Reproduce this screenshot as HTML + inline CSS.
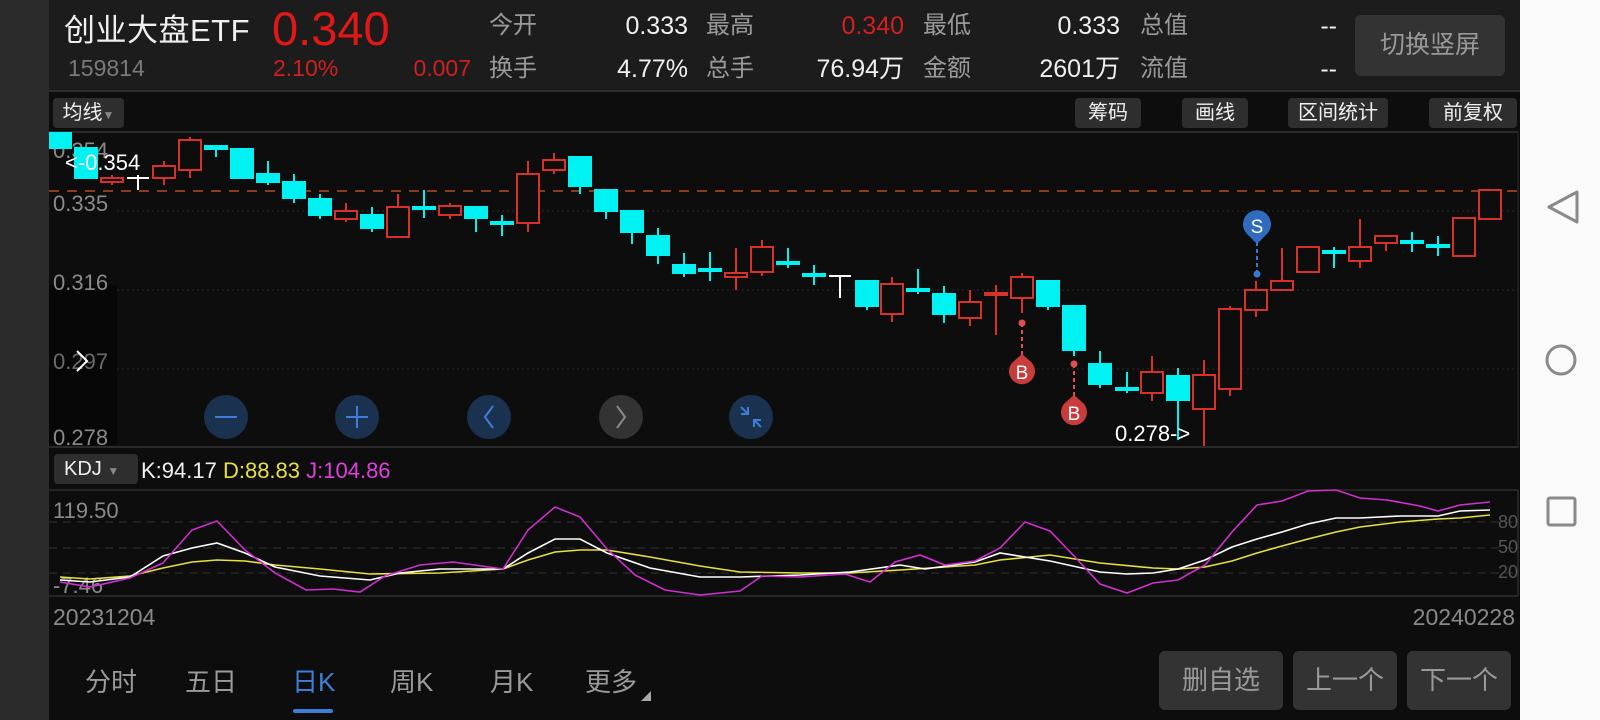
<!DOCTYPE html>
<html><head><meta charset="utf-8"><style>
*{margin:0;padding:0;box-sizing:border-box}
body{width:1600px;height:720px;background:#0d0d0d;position:relative;overflow:hidden;font-family:"Liberation Sans","Noto Sans CJK SC",sans-serif}
.a{position:absolute;white-space:nowrap}
.g{color:#9a9a9a}
.w{color:#f0f0f0}
.r{color:#e01818}
.btn{position:absolute;background:#2e2e2e;color:#f0f0f0;font-size:20px;border-radius:4px;text-align:center}
.bb{position:absolute;background:#333;color:#9a9a9a;font-size:26px;border-radius:6px;text-align:center}
.v{font-size:25px;line-height:30px;height:30px}
.l{font-size:24px;line-height:30px;height:30px}
</style></head><body>
<div class="a" style="left:0;top:0;width:49px;height:720px;background:#2b2b2b"></div>
<div class="a" style="left:49px;top:0;width:1471px;height:90px;background:#1c1c1c"></div>
<div class="a" style="left:49px;top:90px;width:1471px;height:2px;background:#2e2e2e"></div>
<div class="a" style="left:1520px;top:0;width:80px;height:720px;background:#fafafa"></div>
<svg class="a" style="left:1520px;top:0" width="80" height="720">
<path d="M57 192 L29 207 L57 222 Z" fill="none" stroke="#8a8a8a" stroke-width="3" stroke-linejoin="round"/>
<circle cx="41" cy="360" r="14" fill="none" stroke="#8a8a8a" stroke-width="3"/>
<rect x="28" y="498" width="27" height="27" rx="2" fill="none" stroke="#8a8a8a" stroke-width="3"/>
</svg>

<div class="a w" style="left:64px;top:5px;font-size:31px;letter-spacing:0.5px">创业大盘ETF</div>
<div class="a r" style="left:272px;top:1px;font-size:47px">0.340</div>
<div class="a" style="left:68px;top:55px;font-size:23px;color:#7a7a7a">159814</div>
<div class="a r" style="left:273px;top:55px;font-size:23px;color:#d02020">2.10%</div>
<div class="a" style="left:371px;top:55px;font-size:23px;width:100px;text-align:right;color:#d02020">0.007</div>

<div class="a g l" style="left:489px;top:11px">今开</div>
<div class="a w v" style="left:588px;top:11px;width:100px;text-align:right">0.333</div>
<div class="a g l" style="left:706px;top:11px">最高</div>
<div class="a v" style="left:804px;top:11px;width:100px;text-align:right;color:#d02020">0.340</div>
<div class="a g l" style="left:923px;top:11px">最低</div>
<div class="a w v" style="left:1020px;top:11px;width:100px;text-align:right">0.333</div>
<div class="a g l" style="left:1140px;top:11px">总值</div>
<div class="a w v" style="left:1237px;top:11px;width:100px;text-align:right">--</div>

<div class="a g l" style="left:489px;top:54px">换手</div>
<div class="a w v" style="left:588px;top:54px;width:100px;text-align:right">4.77%</div>
<div class="a g l" style="left:706px;top:54px">总手</div>
<div class="a w v" style="left:784px;top:54px;width:120px;text-align:right">76.94万</div>
<div class="a g l" style="left:923px;top:54px">金额</div>
<div class="a w v" style="left:1000px;top:54px;width:120px;text-align:right">2601万</div>
<div class="a g l" style="left:1140px;top:54px">流值</div>
<div class="a w v" style="left:1237px;top:54px;width:100px;text-align:right">--</div>
<div class="a" style="left:1355px;top:15px;width:150px;height:61px;background:#333;border-radius:6px;color:#999;font-size:25px;text-align:center;line-height:61px">切换竖屏</div>

<div class="btn" style="left:53px;top:98px;width:71px;height:30px;line-height:30px">均线<span style="color:#888;font-size:12px">▼</span></div>
<div class="btn" style="left:1075px;top:98px;width:66px;height:30px;line-height:30px">筹码</div>
<div class="btn" style="left:1182px;top:98px;width:66px;height:30px;line-height:30px">画线</div>
<div class="btn" style="left:1288px;top:98px;width:100px;height:30px;line-height:30px">区间统计</div>
<div class="btn" style="left:1429px;top:98px;width:88px;height:30px;line-height:30px">前复权</div>

<svg class="a" style="left:0;top:0" width="1520" height="720">
<defs><clipPath id="cp"><rect x="49" y="132" width="1469" height="316"/></clipPath></defs>
<line x1="49" y1="132" x2="1518" y2="132" stroke="#2a2a2a" stroke-width="2"/>
<rect x="49" y="285" width="68" height="160" fill="#070707"/>
<g stroke="#2c2c2c" stroke-width="1" stroke-dasharray="2,3">
<line x1="117" y1="211" x2="1518" y2="211"/><line x1="117" y1="290" x2="1518" y2="290"/><line x1="117" y1="369" x2="1518" y2="369"/>
</g>
<line x1="49" y1="191" x2="1518" y2="191" stroke="#8a3d1c" stroke-width="2" stroke-dasharray="10,8"/>
<g fill="#8a8a8a" font-size="22" font-family="Liberation Sans,sans-serif">
<text x="53" y="158">0.354</text><text x="53" y="211">0.335</text><text x="53" y="290">0.316</text><text x="53" y="369" fill="#6a6a6a">0.297</text><text x="53" y="445">0.278</text>
</g>
<g clip-path="url(#cp)">
<g fill="#00f2f2" stroke="#00f2f2" stroke-width="2">
<rect x="49" y="133" width="22" height="15"/>
<rect x="75" y="148" width="22" height="30"/>
<line x1="216" y1="146" x2="216" y2="157"/><rect x="205" y="146" width="22" height="3"/>
<rect x="231" y="149" width="22" height="29"/>
<line x1="268" y1="161" x2="268" y2="185"/><rect x="257" y="174" width="22" height="8"/>
<line x1="294" y1="174" x2="294" y2="203"/><rect x="283" y="182" width="22" height="16"/>
<line x1="320" y1="194" x2="320" y2="219"/><rect x="309" y="199" width="22" height="16"/>
<line x1="372" y1="207" x2="372" y2="232"/><rect x="361" y="215" width="22" height="13"/>
<line x1="424" y1="190" x2="424" y2="218"/><rect x="413" y="207" width="22" height="2"/>
<line x1="476" y1="207" x2="476" y2="232"/><rect x="465" y="207" width="22" height="11"/>
<line x1="502" y1="215" x2="502" y2="236"/><rect x="491" y="222" width="22" height="2"/>
<line x1="580" y1="157" x2="580" y2="194"/><rect x="569" y="157" width="22" height="29"/>
<line x1="606" y1="190" x2="606" y2="219"/><rect x="595" y="190" width="22" height="21"/>
<line x1="632" y1="211" x2="632" y2="244"/><rect x="621" y="211" width="22" height="21"/>
<line x1="658" y1="228" x2="658" y2="264"/><rect x="647" y="236" width="22" height="19"/>
<line x1="684" y1="253" x2="684" y2="277"/><rect x="673" y="265" width="22" height="8"/>
<line x1="710" y1="252" x2="710" y2="281"/><rect x="699" y="269" width="22" height="2"/>
<line x1="788" y1="248" x2="788" y2="268"/><rect x="777" y="262" width="22" height="2"/>
<line x1="814" y1="265" x2="814" y2="285"/><rect x="803" y="274" width="22" height="2"/>
<line x1="867" y1="281" x2="867" y2="310"/><rect x="856" y="281" width="22" height="25"/>
<line x1="918" y1="269" x2="918" y2="294"/><rect x="907" y="289" width="22" height="2"/>
<line x1="944" y1="286" x2="944" y2="323"/><rect x="933" y="294" width="22" height="20"/>
<line x1="1048" y1="281" x2="1048" y2="310"/><rect x="1037" y="281" width="22" height="25"/>
<line x1="1074" y1="306" x2="1074" y2="356"/><rect x="1063" y="306" width="22" height="44"/>
<line x1="1100" y1="351" x2="1100" y2="388"/><rect x="1089" y="364" width="22" height="20"/>
<line x1="1127" y1="372" x2="1127" y2="393"/><rect x="1116" y="388" width="22" height="2"/>
<line x1="1178" y1="368" x2="1178" y2="440"/><rect x="1167" y="376" width="22" height="24"/>
<line x1="1334" y1="247" x2="1334" y2="268"/><rect x="1323" y="251" width="22" height="2"/>
<line x1="1412" y1="232" x2="1412" y2="252"/><rect x="1401" y="241" width="22" height="2"/>
<line x1="1438" y1="236" x2="1438" y2="256"/><rect x="1427" y="245" width="22" height="2"/>
</g>
<g fill="none" stroke="#d8302a" stroke-width="2">
<line x1="112" y1="175" x2="112" y2="185"/><rect x="101" y="178" width="22" height="4" fill="#0d0d0d"/>
<line x1="164" y1="161" x2="164" y2="185"/><rect x="153" y="166" width="22" height="12" fill="#0d0d0d"/>
<line x1="190" y1="137" x2="190" y2="178"/><rect x="179" y="140" width="22" height="30" fill="#0d0d0d"/>
<line x1="346" y1="203" x2="346" y2="222"/><rect x="335" y="211" width="22" height="8" fill="#0d0d0d"/>
<line x1="398" y1="194" x2="398" y2="237"/><rect x="387" y="207" width="22" height="30" fill="#0d0d0d"/>
<line x1="450" y1="203" x2="450" y2="219"/><rect x="439" y="206" width="22" height="9" fill="#0d0d0d"/>
<line x1="528" y1="161" x2="528" y2="232"/><rect x="517" y="174" width="22" height="49" fill="#0d0d0d"/>
<line x1="554" y1="153" x2="554" y2="174"/><rect x="543" y="160" width="22" height="10" fill="#0d0d0d"/>
<line x1="736" y1="248" x2="736" y2="290"/><rect x="725" y="273" width="22" height="4" fill="#0d0d0d"/>
<line x1="762" y1="240" x2="762" y2="276"/><rect x="751" y="247" width="22" height="25" fill="#0d0d0d"/>
<line x1="892" y1="277" x2="892" y2="322"/><rect x="881" y="284" width="22" height="30" fill="#0d0d0d"/>
<line x1="970" y1="290" x2="970" y2="326"/><rect x="959" y="302" width="22" height="16" fill="#0d0d0d"/>
<line x1="996" y1="285" x2="996" y2="335"/><rect x="985" y="293" width="22" height="2" fill="#0d0d0d"/>
<line x1="1022" y1="273" x2="1022" y2="313"/><rect x="1011" y="277" width="22" height="21" fill="#0d0d0d"/>
<line x1="1152" y1="356" x2="1152" y2="401"/><rect x="1141" y="372" width="22" height="21" fill="#0d0d0d"/>
<line x1="1204" y1="360" x2="1204" y2="448"/><rect x="1193" y="375" width="22" height="34" fill="#0d0d0d"/>
<line x1="1230" y1="306" x2="1230" y2="396"/><rect x="1219" y="309" width="22" height="80" fill="#0d0d0d"/>
<line x1="1256" y1="281" x2="1256" y2="317"/><rect x="1245" y="290" width="22" height="20" fill="#0d0d0d"/>
<line x1="1282" y1="248" x2="1282" y2="290"/><rect x="1271" y="281" width="22" height="9" fill="#0d0d0d"/>
<rect x="1297" y="247" width="22" height="25" fill="#0d0d0d"/>
<line x1="1360" y1="219" x2="1360" y2="268"/><rect x="1349" y="247" width="22" height="14" fill="#0d0d0d"/>
<line x1="1386" y1="236" x2="1386" y2="251"/><rect x="1375" y="236" width="22" height="7" fill="#0d0d0d"/>
<rect x="1453" y="218" width="22" height="38" fill="#0d0d0d"/>
<rect x="1479" y="190" width="22" height="29" fill="#0d0d0d"/>
</g>
<g stroke="#fff" stroke-width="2">
<line x1="127" y1="178" x2="149" y2="178"/><line x1="138" y1="175" x2="138" y2="190"/>
<line x1="829" y1="276" x2="851" y2="276"/><line x1="840" y1="276" x2="840" y2="298"/>
</g>
</g>
<g stroke="#e05050" stroke-width="2" stroke-dasharray="4,3"><line x1="1022" y1="323" x2="1022" y2="358"/><line x1="1074" y1="364" x2="1074" y2="399"/></g>
<g fill="#e05050"><circle cx="1022" cy="323" r="3.5"/><circle cx="1074" cy="364" r="3.5"/></g>
<g fill="#c83c3c">
<path d="M1022 354 L1030 361 A13 13 0 1 1 1014 361 Z"/><path d="M1074 395 L1082 402 A13 13 0 1 1 1066 402 Z"/>
</g>
<g fill="#fff" font-size="19" font-family="Liberation Sans,sans-serif" text-anchor="middle"><text x="1022" y="379">B</text><text x="1074" y="420">B</text></g>
<line x1="1257" y1="242" x2="1257" y2="274" stroke="#3a78d0" stroke-width="2" stroke-dasharray="4,3"/>
<circle cx="1257" cy="274" r="3.5" fill="#3a78d0"/>
<path d="M1257 244 L1248 235 A14 14 0 1 1 1266 235 Z" fill="#2f6cc0"/>
<text x="1257" y="233" fill="#fff" font-size="19" font-family="Liberation Sans,sans-serif" text-anchor="middle">S</text>
<text x="65" y="170" fill="#fff" font-size="22" font-family="Liberation Sans,sans-serif">&lt;-0.354</text>
<text x="1115" y="441" fill="#fff" font-size="22" font-family="Liberation Sans,sans-serif">0.278-&gt;</text>
<path d="M77 351 L87 361 L77 371" fill="none" stroke="#fff" stroke-width="2"/>
<g fill="#1b3150"><circle cx="226" cy="417" r="22"/><circle cx="357" cy="417" r="22"/><circle cx="489" cy="417" r="22"/><circle cx="751" cy="417" r="22"/></g>
<circle cx="621" cy="417" r="22" fill="#333"/>
<g stroke="#3d7fd8" stroke-width="2" fill="none">
<line x1="215" y1="417" x2="237" y2="417"/>
<line x1="346" y1="417" x2="368" y2="417"/><line x1="357" y1="406" x2="357" y2="428"/>
<path d="M493 406 L485 417 L493 428"/>
<path d="M741 407 L748 414 M741 414 L748 414 L748 407 M761 427 L754 420 M754 427 L754 420 L761 420"/>
</g>
<path d="M617 406 L625 417 L617 428" fill="none" stroke="#888" stroke-width="2"/>
<line x1="1518" y1="132" x2="1518" y2="448" stroke="#2a2a2a"/>
<line x1="49" y1="447" x2="1518" y2="447" stroke="#2a2a2a" stroke-width="2"/>
<line x1="49" y1="490" x2="1518" y2="490" stroke="#3a3a3a"/>
<line x1="49" y1="596" x2="1518" y2="596" stroke="#3a3a3a"/>
<line x1="1518" y1="490" x2="1518" y2="596" stroke="#3a3a3a"/>
<g stroke="#333" stroke-dasharray="8,6"><line x1="49" y1="522" x2="1518" y2="522"/><line x1="49" y1="548" x2="1518" y2="548"/><line x1="49" y1="573" x2="1518" y2="573"/></g>
<g fill="#8a8a8a" font-size="22" font-family="Liberation Sans,sans-serif"><text x="53" y="518">119.50</text><text x="53" y="593">-7.46</text></g>
<g fill="#555" font-size="18" font-family="Liberation Sans,sans-serif" text-anchor="end"><text x="1518" y="528">80</text><text x="1518" y="553">50</text><text x="1518" y="578">20</text></g>
<polyline fill="none" stroke="#e8e040" stroke-width="1.6" points="60,577 90,579 130,576 163,568 192,562 217,560 245,561 275,565 320,569 370,574 440,573 503,569 528,560 555,552 580,550 607,550 650,557 700,566 740,572 800,573 850,573 900,570 975,565 1000,560 1050,555 1100,563 1153,568 1178,569 1205,567 1232,561 1257,553 1282,546 1308,539 1336,532 1360,527 1400,522 1438,519 1460,518 1490,515"/>
<polyline fill="none" stroke="#fff" stroke-width="1.6" points="60,580 90,582 130,577 163,556 192,548 217,543 245,553 275,567 320,576 370,580 400,573 440,569 503,569 528,553 555,539 580,539 607,553 650,568 700,577 740,577 800,575 850,572 900,565 925,569 975,562 1000,553 1050,561 1100,572 1127,574 1153,573 1178,569 1205,560 1232,547 1257,539 1282,532 1308,524 1336,518 1360,518 1400,516 1438,516 1460,511 1490,510"/>
<polyline fill="none" stroke="#d030d0" stroke-width="1.6" points="60,582 90,587 130,578 163,563 192,530 217,521 245,550 275,573 306,590 333,589 360,592 385,576 420,565 453,562 503,569 528,530 555,507 580,517 607,549 635,575 665,590 700,595 740,591 762,576 800,577 830,575 845,574 870,582 895,562 920,555 945,565 975,561 1000,548 1025,522 1050,531 1075,557 1100,584 1127,593 1153,583 1178,580 1205,565 1232,532 1257,505 1282,501 1308,491 1336,490 1360,498 1387,500 1420,506 1438,511 1460,505 1490,502"/>
</svg>
<div class="btn" style="left:54px;top:454px;width:84px;height:30px;line-height:30px;font-size:20px;text-align:left;padding-left:10px">KDJ <span style="color:#888;font-size:12px">▼</span></div>
<div class="a" style="left:141px;top:458px;font-size:22px;color:#f0f0f0">K:94.17 <span style="color:#e8e040">D:88.83</span> <span style="color:#e040e0">J:104.86</span></div>
<div class="a g" style="left:53px;top:604px;font-size:23px;color:#8a8a8a">20231204</div>
<div class="a g" style="left:1315px;top:604px;width:200px;text-align:right;font-size:23px;color:#8a8a8a">20240228</div>

<div class="a g" style="left:85px;top:662px;font-size:26px">分时</div>
<div class="a g" style="left:185px;top:662px;font-size:26px">五日</div>
<div class="a" style="left:292px;top:662px;font-size:26px;color:#3d7fd8">日K</div>
<div class="a" style="left:293px;top:709px;width:40px;height:4px;background:#3d7fd8;border-radius:2px"></div>
<div class="a g" style="left:390px;top:662px;font-size:26px">周K</div>
<div class="a g" style="left:490px;top:662px;font-size:26px">月K</div>
<div class="a g" style="left:585px;top:662px;font-size:26px">更多</div>
<svg class="a" style="left:641px;top:691px" width="10" height="10"><path d="M10 0 L10 10 L0 10 Z" fill="#aaa"/></svg>
<div class="bb" style="left:1159px;top:651px;width:124px;height:59px;line-height:59px">删自选</div>
<div class="bb" style="left:1293px;top:651px;width:104px;height:59px;line-height:59px">上一个</div>
<div class="bb" style="left:1407px;top:651px;width:104px;height:59px;line-height:59px">下一个</div>
</body></html>
